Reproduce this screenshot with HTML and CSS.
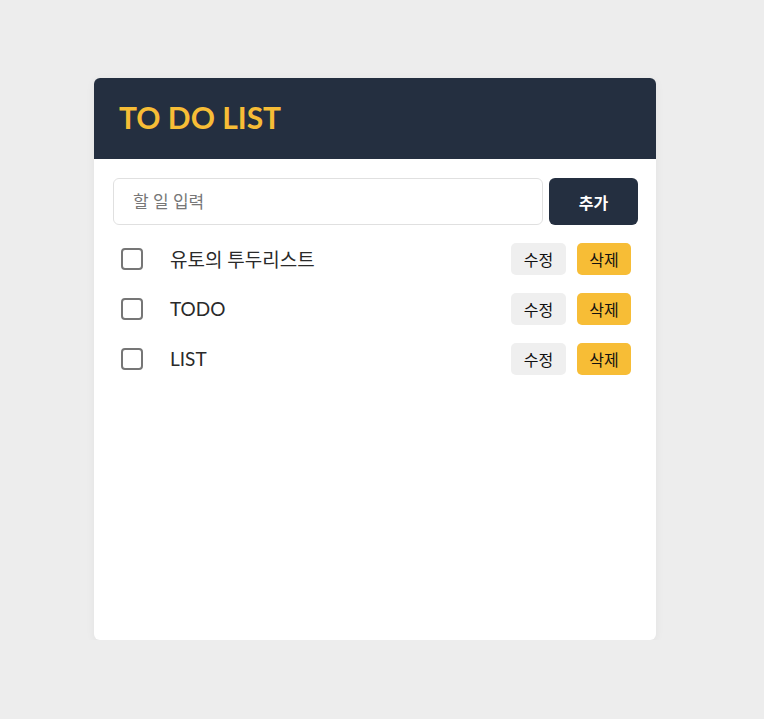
FILE: index.html
```html
<!DOCTYPE html>
<html lang="ko">
<head>
    <meta charset="UTF-8">
    <meta name="viewport" content="width=device-width, initial-scale=1.0">
    <title>TO DO LIST</title>
    <link rel="stylesheet" href="styles.css">
</head>
<body>

<div class="todo-app">
    <div class="todo-header">
        <h1>TO DO LIST</h1>
    </div>

    <div class="todo-body">
        <form class="todo-form">
            <input type="text" class="todo-input" placeholder="할 일 입력">
            <button type="button" class="add-btn">추가</button>
        </form>

        <ul class="todo-list">
            <li class="todo-item">
                <input type="checkbox" class="todo-check">
                <span class="todo-text">유토의 투두리스트</span>
                <button class="edit-btn">수정</button>
                <button class="delete-btn">삭제</button>
            </li>
            <li class="todo-item">
                <input type="checkbox" class="todo-check">
                <span class="todo-text">TODO</span>
                <button class="edit-btn">수정</button>
                <button class="delete-btn">삭제</button>
            </li>
            <li class="todo-item">
                <input type="checkbox" class="todo-check">
                <span class="todo-text">LIST</span>
                <button class="edit-btn">수정</button>
                <button class="delete-btn">삭제</button>
            </li>
        </ul>
    </div>
</div>

</body>
</html>
```

FILE: styles.css
```css
body {
    font-family: Lato, "Noto Sans CJK KR", sans-serif;
    margin: 0;
    background-color: #ededed;
}
.todo-app {
    width: 562px;
    height: 562px;
    margin: 78px 0 0 94px;
    background-color: white;
    border-radius: 6px;
    box-shadow: 0 2px 10px rgba(0, 0, 0, 0.05);
    overflow: hidden;
}
.todo-header {
    height: 81px;
    background-color: #242f40;
    padding-left: 25px;
    display: flex;
    align-items: center;
}
.todo-header h1 {
    margin: 0 0 4px;
    color: #f7bd36;
    font-size: 30px;
    font-weight: 700;
}
.todo-body {
    padding: 19px 18px 19px 19px;
}
.todo-form {
    display: flex;
    gap: 6px;
    margin: 0 0 18px;
}
.todo-input {
    flex: 1;
    height: 47px;
    box-sizing: border-box;
    border: 1px solid #e0e0e0;
    border-radius: 6px;
    padding: 0 19px;
    font-family: inherit;
    font-size: 17px;
    color: #222;
    outline: none;
}
.todo-input::placeholder {
    color: #777;
}
.add-btn {
    width: 89px;
    height: 47px;
    border: none;
    border-radius: 6px;
    background-color: #242f40;
    color: white;
    font-family: inherit;
    font-size: 16px;
    font-weight: 600;
    cursor: pointer;
}
.todo-list {
    list-style: none;
    margin: 0;
    padding: 0 7px 0 8px;
}
.todo-item {
    display: flex;
    align-items: center;
    height: 32px;
    margin-bottom: 18px;
}
.todo-check {
    appearance: none;
    width: 22px;
    height: 22px;
    margin: 0 27px 0 0;
    border: 2px solid #767676;
    border-radius: 4px;
    box-sizing: border-box;
}
.todo-text {
    flex: 1;
    margin-bottom: 2px;
    font-size: 19px;
    color: #2a2a2a;
}
.edit-btn, .delete-btn {
    width: 55px;
    height: 32px;
    border: none;
    border-radius: 5px;
    font-family: inherit;
    font-size: 16px;
    color: #111;
    cursor: pointer;
}
.edit-btn {
    background-color: #efefef;
    margin-right: 11px;
}
.delete-btn {
    width: 54px;
    background-color: #f7bd36;
}
```
